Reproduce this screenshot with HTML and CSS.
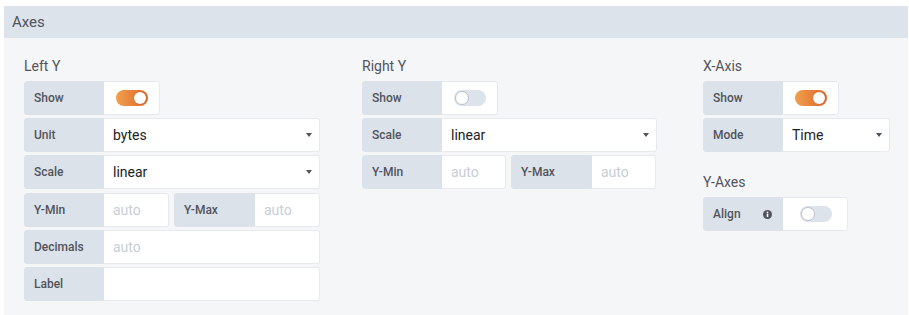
FILE: index.html
```html
<!DOCTYPE html>
<html lang="en">
<head>
    <meta charset="UTF-8">
    <meta name="viewport" content="width=device-width, initial-scale=1.0">
    <title>Axes</title>
    <link rel="stylesheet" href="styles.css">
</head>
<body>
    <div class="section-header">Axes</div>

    <div class="panel">
        <!-- Left Y -->
        <div class="group group-left">
            <div class="group-title">Left Y</div>
            <div class="row">
                <div class="label">Show</div>
                <div class="switch-box"><span class="switch on"></span></div>
            </div>
            <div class="row">
                <div class="label">Unit</div>
                <div class="select wide">bytes <span class="caret"></span></div>
            </div>
            <div class="row">
                <div class="label">Scale</div>
                <div class="select wide">linear <span class="caret"></span></div>
            </div>
            <div class="row">
                <div class="label">Y-Min</div>
                <div class="input small placeholder">auto</div>
                <div class="label second">Y-Max</div>
                <div class="input small placeholder">auto</div>
            </div>
            <div class="row">
                <div class="label">Decimals</div>
                <div class="input wide placeholder">auto</div>
            </div>
            <div class="row">
                <div class="label">Label</div>
                <div class="input wide"></div>
            </div>
        </div>

        <!-- Right Y -->
        <div class="group group-right">
            <div class="group-title">Right Y</div>
            <div class="row">
                <div class="label">Show</div>
                <div class="switch-box"><span class="switch"></span></div>
            </div>
            <div class="row">
                <div class="label">Scale</div>
                <div class="select wide">linear <span class="caret"></span></div>
            </div>
            <div class="row">
                <div class="label">Y-Min</div>
                <div class="input small placeholder">auto</div>
                <div class="label second">Y-Max</div>
                <div class="input small placeholder">auto</div>
            </div>
        </div>

        <!-- X-Axis / Y-Axes -->
        <div class="group group-x">
            <div class="group-title">X-Axis</div>
            <div class="row">
                <div class="label">Show</div>
                <div class="switch-box"><span class="switch on"></span></div>
            </div>
            <div class="row">
                <div class="label">Mode</div>
                <div class="select wide">Time <span class="caret"></span></div>
            </div>

            <div class="group-title spaced">Y-Axes</div>
            <div class="row">
                <div class="label with-icon">
                    Align
                    <svg class="info" width="9" height="9" viewBox="0 0 8 8">
                        <circle cx="4" cy="4" r="4" fill="#52545c"/>
                        <rect x="3.3" y="3.2" width="1.4" height="3" fill="#fff"/>
                        <circle cx="4" cy="2.1" r="0.8" fill="#fff"/>
                    </svg>
                </div>
                <div class="switch-box align-box"><span class="switch"></span></div>
            </div>
        </div>
    </div>
</body>
</html>
```

FILE: styles.css
```css
body {
    margin: 0;
    padding: 6px 1px 0 4px;
    font-family: Roboto, "Liberation Sans", Arial, sans-serif;
    background: #fff;
    color: #52545c;
}

.section-header {
    height: 32px;
    line-height: 32px;
    padding-left: 8px;
    background: #dde3ea;
    font-size: 15px;
    color: #52545c;
}

.panel {
    display: flex;
    background: #f5f6f8;
    padding: 18px 0 14px 20px;
}

.group {
    flex-shrink: 0;
}

.group-left {
    width: 296px;
    margin-right: 42px;
}

.group-right {
    width: 295px;
    margin-right: 46px;
}

.group-x {
    width: 187px;
}

.group-title {
    font-size: 14px;
    line-height: 20px;
    height: 20px;
    margin-bottom: 5px;
    color: #52545c;
}

.group-title.spaced {
    margin-top: 20px;
}

.row {
    display: flex;
    height: 34px;
    margin-bottom: 3.2px;
}

.label {
    box-sizing: border-box;
    width: 80px;
    flex-shrink: 0;
    display: flex;
    align-items: center;
    padding-left: 9px;
    background: #dce2ea;
    border: 1px solid #dce2ea;
    border-radius: 3px 0 0 3px;
    font-size: 12px;
    font-weight: 500;
    color: #52545c;
}

.label.second {
    width: 81px;
    margin-left: 5px;
}

.label.with-icon {
    justify-content: space-between;
    padding-right: 10px;
}

.info {
    display: block;
}

.input,
.select,
.switch-box {
    box-sizing: border-box;
    display: flex;
    align-items: center;
    background: #fff;
    border: 1px solid #e6eaf0;
    border-left: none;
    border-radius: 0 3px 3px 0;
    font-size: 14px;
    color: #222;
    padding-left: 9px;
}

.wide {
    flex: 1;
}

.small {
    width: 65px;
}

.group-right .small {
    width: 64px;
}

.placeholder {
    color: #c7ced6;
}

.select {
    justify-content: space-between;
    padding-right: 7px;
}

.caret {
    width: 0;
    height: 0;
    border-left: 3px solid transparent;
    border-right: 3px solid transparent;
    border-top: 4px solid #52545c;
}

.switch-box {
    width: 56px;
    padding-left: 12px;
}

.switch-box.align-box {
    width: 65px;
    padding-left: 17px;
}

.switch {
    position: relative;
    display: block;
    width: 32px;
    height: 16px;
    border-radius: 8px;
    background: #dde3ea;
}

.switch::after {
    content: "";
    position: absolute;
    top: 1px;
    left: 1px;
    width: 12px;
    height: 12px;
    border-radius: 50%;
    background: #fff;
    border: 1px solid #b9c0c8;
}

.switch.on {
    background: linear-gradient(90deg, #f0a04c, #e0652a);
}

.switch.on::after {
    left: auto;
    right: 2px;
    top: 2px;
    border: none;
    box-shadow: 0 0 1px rgba(0, 0, 0, 0.3);
}
```
